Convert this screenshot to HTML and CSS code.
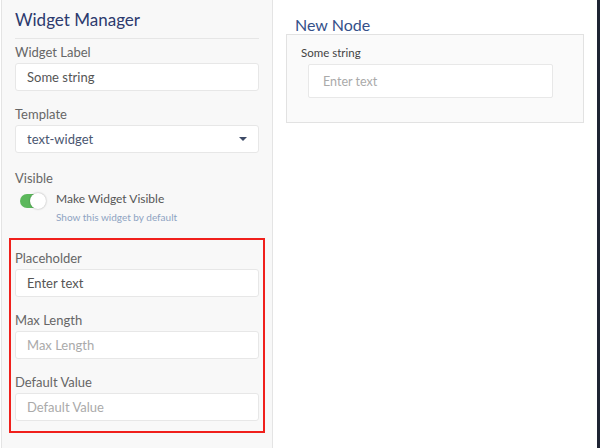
FILE: index.html
```html
<!DOCTYPE html>
<html>
<head>
<meta charset="utf-8">
<link rel="stylesheet" href="styles.css">
</head>
<body>
<div class="page">
  <aside class="panel">
    <h1 class="panel-title">Widget Manager</h1>
    <div class="field">
      <label class="label">Widget Label</label>
      <div class="input">Some string</div>
    </div>
    <div class="field">
      <label class="label">Template</label>
      <div class="input select"><span class="select-value">text-widget</span><span class="caret"></span></div>
    </div>
    <div class="field visible">
      <label class="label">Visible</label>
      <div class="toggle-row">
        <span class="toggle"><span class="knob"></span></span>
        <div class="toggle-text">
          <div class="toggle-title">Make Widget Visible</div>
          <div class="toggle-help">Show this widget by default</div>
        </div>
      </div>
    </div>
    <div class="highlight">
      <div class="field">
        <label class="label">Placeholder</label>
        <div class="input">Enter text</div>
      </div>
      <div class="field">
        <label class="label">Max Length</label>
        <div class="input placeholder">Max Length</div>
      </div>
      <div class="field last">
        <label class="label">Default Value</label>
        <div class="input placeholder">Default Value</div>
      </div>
    </div>
  </aside>
  <main class="main">
    <h2 class="node-title">New Node</h2>
    <div class="card">
      <div class="card-label">Some string</div>
      <div class="card-input">Enter text</div>
    </div>
  </main>
</div>
</body>
</html>
```
FILE: styles.css
```css
* { box-sizing: border-box; }
html, body { margin: 0; padding: 0; background: #fff; }
body { font-family: Lato, "Open Sans", sans-serif; }
.page {
  display: flex;
  width: 600px;
  height: 448px;
  border-right: 3px solid #1e2433;
  overflow: hidden;
}
.panel {
  width: 272px;
  margin-left: 1px;
  height: 448px;
  background: #f8f8f8;
  border-left: 1px solid #e4e4e4;
  border-right: 1px solid #e4e4e4;
  padding: 0 13px 0 13px;
}
.panel-title {
  margin: 0 0 4px 0;
  padding: 8px 0 7px 0;
  font-size: 17px;
  line-height: 23px;
  font-weight: 400;
  color: #2c3a6e;
  border-bottom: 1px solid #e6e6e6;
}
.field { margin-bottom: 14px; }
.label {
  display: block;
  font-size: 13px;
  line-height: 18px;
  color: #666;
  margin-bottom: 2px;
}
.input {
  height: 28px;
  background: #fff;
  border: 1px solid #e7e7e7;
  border-radius: 3px;
  padding: 0 11px;
  font-size: 13px;
  line-height: 26px;
  color: #555;
}
.input.placeholder { color: #aaa; }
.select { display: flex; justify-content: space-between; align-items: center; }
.select-value { color: #4a5670; }
.caret {
  width: 0; height: 0;
  border-left: 4px solid transparent;
  border-right: 4px solid transparent;
  border-top: 4px solid #3d4a66;
}
.visible { margin-top: 16px; margin-bottom: 0; }
.toggle-row { display: flex; gap: 11px; padding-left: 5px; margin-top: 1px; }
.toggle {
  width: 25px;
  height: 14px;
  border-radius: 7px;
  background: #5cb85c;
  position: relative;
  margin-top: 5px;
  flex: none;
}
.knob {
  position: absolute;
  right: -1px;
  top: -1px;
  width: 16px;
  height: 16px;
  border-radius: 50%;
  background: #fff;
  box-shadow: 0 0 2px rgba(0,0,0,0.35);
}
.toggle-title { font-size: 12px; line-height: 18px; color: #555; margin-top: 1px; }
.toggle-help { font-size: 10px; line-height: 18px; color: #8ea3c2; }
.highlight {
  margin: 12px -6px 0 -6px;
  border: 2px solid #f0201c;
  padding: 9px 4px 10px 4px;
}
.field.last { margin-bottom: 0; }
.main { flex: 1; padding: 15px 13px 0 13px; }
.node-title {
  margin: 0 0 0 9px;
  font-size: 16px;
  line-height: 19px;
  font-weight: 400;
  color: #34508a;
}
.card {
  background: #fafafa;
  border: 1px solid #e2e2e2;
  height: 89px;
  padding: 10px 0 0 14px;
}
.card-label { font-size: 11.5px; line-height: 16px; color: #444; }
.card-input {
  margin: 3px 0 0 7px;
  width: 245px;
  height: 34px;
  background: #fff;
  border: 1px solid #e8e8e8;
  border-radius: 2px;
  padding: 0 14px;
  font-size: 12.5px;
  line-height: 34px;
  color: #aaa;
}
```
